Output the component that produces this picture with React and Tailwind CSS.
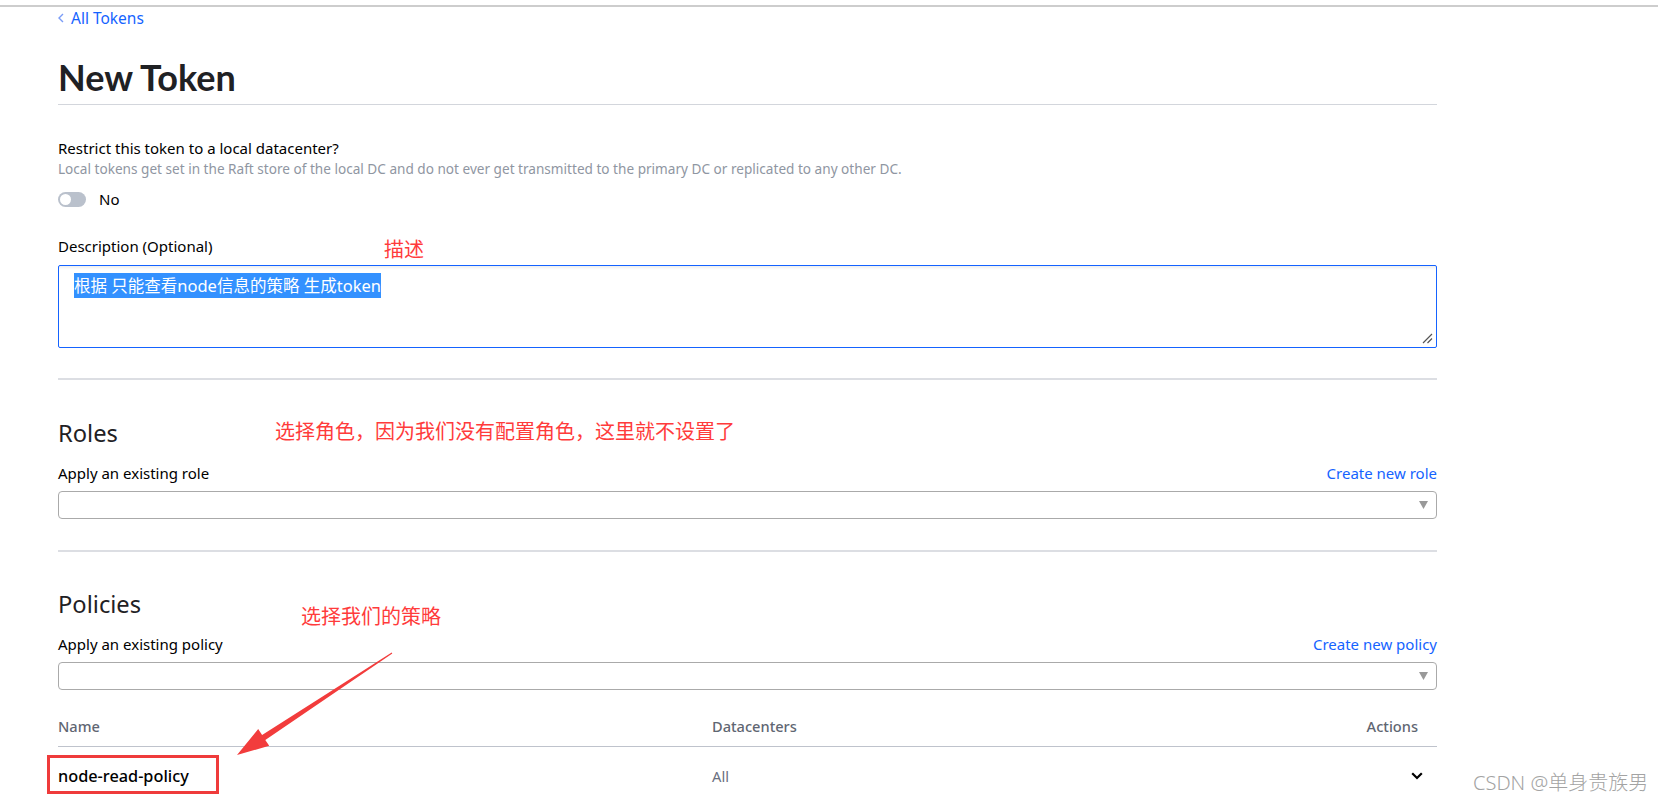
const sans = { fontFamily: '"Noto Sans", "Noto Sans CJK SC", sans-serif' };

// Annotation marks painted over the screenshot
function Marks() {
  return (
    <>
      <span className="absolute left-[384px] top-[236px] text-[20px] leading-[28px] text-[#ff3b3b]">描述</span>
      <span className="absolute left-[275px] top-[418px] text-[20px] leading-[28px] text-[#ff3b3b]">
        选择角色，因为我们没有配置角色，这里就不设置了
      </span>
      <span className="absolute left-[301px] top-[603px] text-[20px] leading-[28px] text-[#ff3b3b]">选择我们的策略</span>
      <div className="absolute left-[47px] top-[755px] w-[172px] h-[39px] border-[3px] border-[#ef3b3b]" />
      <svg className="absolute left-0 top-0 pointer-events-none" width="1658" height="803">
        <polygon
          fill="#f23c3c"
          points="391.7,652.6 262.1,734.9 258.2,729 237,755 269.2,745.8 265.3,739.9 392.3,653.4"
        />
      </svg>
      <span
        className="absolute left-[1473px] top-[769px] text-[20px] leading-[28px] text-[#a3a3a3] font-light"
        style={{ textShadow: "0 0 2px #fff" }}
      >
        CSDN @单身贵族男
      </span>
    </>
  );
}

function Select() {
  return (
    <div className="mt-[8px] h-[28px] rounded-[4px] border border-[#aaaaaa] bg-white flex items-center justify-end pr-[8px]">
      <svg width="9" height="8" viewBox="0 0 9 8">
        <path d="M0 0 H9 L4.5 8 Z" fill="#999999" />
      </svg>
    </div>
  );
}

export default function App() {
  return (
    <div className="relative w-[1658px] h-[803px] overflow-hidden bg-white text-[#1f2124]" style={sans}>
      <div className="mt-[5px] h-[2px] bg-[#cdcdcd]" />

      <div className="ml-[58px] w-[1379px]">
        {/* Breadcrumb */}
        <a className="mt-[1px] h-[20px] flex items-center gap-[7px] text-[15.5px] leading-[20px] text-[#1563ff]">
          <svg width="6" height="10" viewBox="0 0 6 10">
            <path d="M5 1 L1 5 L5 9" fill="none" stroke="#7a9cf7" strokeWidth="1.4" />
          </svg>
          All Tokens
        </a>

        {/* Title */}
        <h1
          className="mt-[27px] text-[36px] leading-[44px] font-bold text-[#1f2124]"
          style={{ fontFamily: "Lato, sans-serif" }}
        >
          New Token
        </h1>
        <div className="mt-[5px] h-px bg-[#d3d6dc]" />

        {/* Local toggle */}
        <p className="mt-[33px] text-[15px] leading-[20px] text-black">Restrict this token to a local datacenter?</p>
        <p className="mt-[1px] text-[13.6px] leading-[20px] text-[#8f96a2]">
          Local tokens get set in the Raft store of the local DC and do not ever get transmitted to the primary DC or
          replicated to any other DC.
        </p>
        <div className="mt-[10px] h-[20px] flex items-center">
          <span className="w-[28px] h-[15px] rounded-full bg-[#bac1cc] flex items-center pl-[2px]">
            <span className="w-[11px] h-[11px] rounded-full bg-white" />
          </span>
          <span className="ml-[13px] text-[15px] text-black">No</span>
        </div>

        {/* Description */}
        <p className="mt-[27px] text-[15px] leading-[20px] text-black">Description (Optional)</p>
        <div className="relative mt-[9px] h-[83px] rounded-[2px] border border-[#1563ff] px-[15px] pt-[7px] shadow-[inset_0_4px_3px_-2px_rgba(0,0,0,0.07)]">
          <span className="bg-[#3391ff] text-white text-[16.5px] leading-[25px] inline-block">
            根据 只能查看node信息的策略 生成token
          </span>
          <svg className="absolute right-[3px] bottom-[3px]" width="11" height="11" viewBox="0 0 11 11">
            <path d="M10 1 L1 10 M10 5.5 L5.5 10" stroke="#555" strokeWidth="1.2" />
          </svg>
        </div>

        <div className="mt-[30px] h-[2px] bg-[#dcdee3]" />

        {/* Roles */}
        <h2 className="mt-[37px] text-[23.7px] leading-[32px] font-normal text-[#1f2124]">Roles</h2>
        <div className="mt-[14px] h-[20px] flex items-center justify-between text-[15px] leading-[20px]">
          <span className="text-black">Apply an existing role</span>
          <a className="text-[#1563ff]">Create new role</a>
        </div>
        <Select />

        <div className="mt-[31px] h-[2px] bg-[#dcdee3]" />

        {/* Policies */}
        <h2 className="mt-[36px] text-[23.7px] leading-[32px] font-normal text-[#1f2124]">Policies</h2>
        <div className="mt-[14px] h-[20px] flex items-center justify-between text-[15px] leading-[20px]">
          <span className="text-black">Apply an existing policy</span>
          <a className="text-[#1563ff]">Create new policy</a>
        </div>
        <Select />

        {/* Policies table */}
        <div className="mt-[26px] pb-[10px] border-b border-[#bfc3cc] grid grid-cols-[654px_1fr_auto] text-[14.6px] leading-[20px] font-medium text-[#5f6672]">
          <span>Name</span>
          <span>Datacenters</span>
          <span className="pr-[19px]">Actions</span>
        </div>
        <div className="pt-[19px] grid grid-cols-[654px_1fr_auto] items-center leading-[20px]">
          <span className="text-[16.3px] font-medium text-black">node-read-policy</span>
          <span className="text-[14.7px] text-[#6a7080]">All</span>
          <span className="pr-[14px] flex items-center h-[20px]">
            <svg width="12" height="8" viewBox="0 0 12 8">
              <path d="M1.2 1.2 L6 6 L10.8 1.2" fill="none" stroke="#000" strokeWidth="2.2" />
            </svg>
          </span>
        </div>
      </div>

      <Marks />
    </div>
  );
}
